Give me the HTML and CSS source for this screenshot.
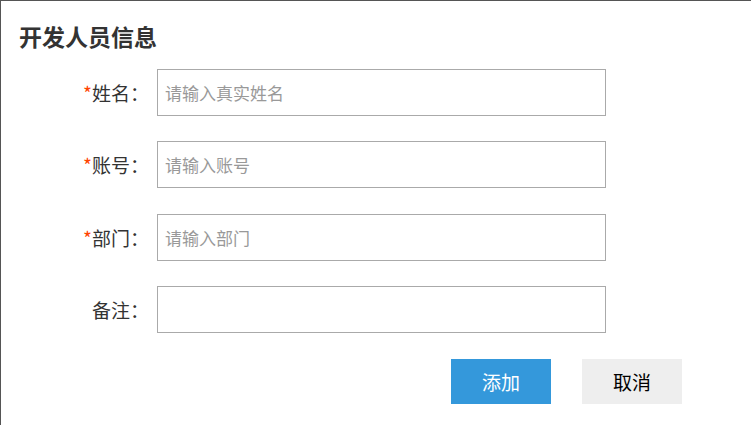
FILE: index.html
```html
<!DOCTYPE html>
<html lang="zh-CN">
<head>
<meta charset="utf-8">
<title>开发人员信息</title>
<link rel="stylesheet" href="styles.css">
</head>
<body>
<div class="panel">
  <h2 class="title">开发人员信息</h2>
  <form class="form">
    <div class="row">
      <label class="label"><span class="req">*</span>姓名：</label>
      <input class="input" type="text" placeholder="请输入真实姓名">
    </div>
    <div class="row row-b">
      <label class="label"><span class="req">*</span>账号：</label>
      <input class="input" type="text" placeholder="请输入账号">
    </div>
    <div class="row">
      <label class="label"><span class="req">*</span>部门：</label>
      <input class="input" type="text" placeholder="请输入部门">
    </div>
    <div class="row row-b">
      <label class="label">备注：</label>
      <input class="input" type="text">
    </div>
    <div class="actions">
      <button type="button" class="btn btn-primary">添加</button>
      <button type="button" class="btn btn-default">取消</button>
    </div>
  </form>
</div>
</body>
</html>
```
FILE: styles.css
```css
html, body {
  margin: 0;
  padding: 0;
  background: #fff;
}
body {
  font-family: "Noto Sans CJK SC", "Noto Sans", sans-serif;
  color: #333;
}
.panel {
  box-sizing: border-box;
  width: 751px;
  height: 425px;
  border-top: 1px solid #555;
  border-left: 1px solid #555;
  padding: 19px 0 0 20px;
}
.title {
  margin: 0 0 0 -2px;
  font-size: 23px;
  line-height: 32px;
  font-weight: bold;
  color: #333;
}
.form {
  margin-top: 17px;
  display: flex;
  flex-direction: column;
}
.row {
  display: flex;
  align-items: center;
  height: 47px;
  margin-bottom: 25px;
}
.row-b {
  margin-bottom: 26px;
}
.label {
  width: 128px;
  margin-right: 8px;
  text-align: right;
  font-size: 19px;
  color: #333;
}
.req {
  color: #f40;
}
.input {
  box-sizing: border-box;
  width: 449px;
  height: 47px;
  border: 1px solid #aaa;
  padding: 0 7px;
  font-family: inherit;
  font-size: 17px;
  color: #333;
  outline: none;
}
.input::placeholder {
  color: #999;
}
.actions {
  display: flex;
  gap: 31px;
  padding-left: 430px;
}
.btn {
  width: 100px;
  height: 45px;
  border: none;
  font-family: inherit;
  font-size: 19px;
  cursor: pointer;
}
.btn-primary {
  background: #3498db;
  color: #fff;
}
.btn-default {
  background: #eee;
  color: #000;
}
```
